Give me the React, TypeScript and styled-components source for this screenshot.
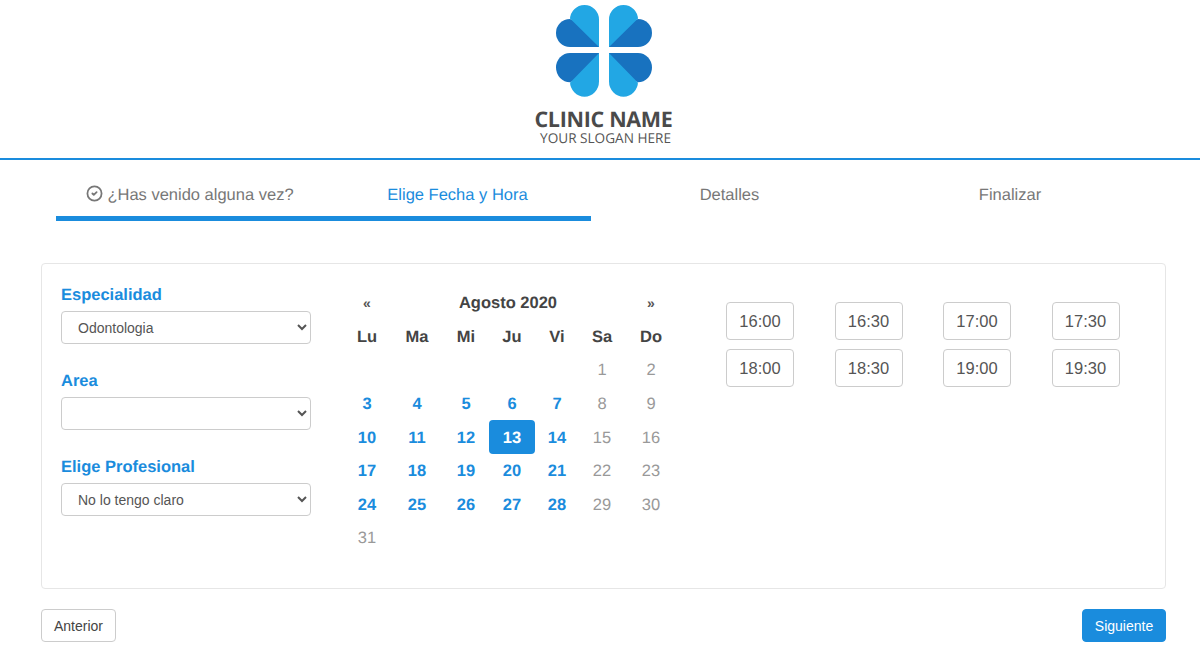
import * as React from "react";
import styled, { createGlobalStyle } from "styled-components";
import { CircleCheck } from "lucide-react";

const BLUE = "#1a8cdd";

const GlobalStyle = createGlobalStyle`
  html, body {
    margin: 0;
    padding: 0;
    background: #fff;
    font-family: "Liberation Sans", Arial, sans-serif;
    color: #555;
    text-rendering: geometricPrecision;
  }
`;

const Page = styled.div`
  width: 1200px;
  height: 654px;
  overflow: hidden;
`;

const Header = styled.header`
  height: 158px;
  border-bottom: 2px solid ${BLUE};
  display: flex;
  flex-direction: column;
  align-items: center;
`;

const LogoMark = styled.svg`
  display: block;
  width: 96px;
  height: 92px;
  margin: 5px 0 0 8px;
`;

const ClinicName = styled.div`
  font-family: "Open Sans", sans-serif;
  font-weight: 700;
  font-size: 21.5px;
  line-height: 20px;
  margin: 13px 0 0 7px;
  letter-spacing: -0.3px;
  color: #4a4a4a;
`;

const Slogan = styled.div`
  font-family: "Open Sans", sans-serif;
  font-size: 13.6px;
  line-height: 16px;
  margin-left: 11px;
  color: #555;
`;

const Tabs = styled.nav`
  display: grid;
  grid-template-columns: 268px 267px 277px 284px;
  margin-left: 56px;
  height: 61px;
`;

const Tab = styled.div<{ $active?: boolean; $done?: boolean }>`
  display: flex;
  align-items: center;
  justify-content: center;
  gap: 4px;
  box-sizing: border-box;
  padding-top: 14px;
  font-size: 16.5px;
  color: ${(p) => (p.$active ? BLUE : "#777")};
  border-bottom: 5px solid ${(p) => (p.$active || p.$done ? BLUE : "transparent")};
`;

const DoneIcon = styled(CircleCheck)`
  margin-top: -3px;
`;

const Content = styled.main`
  margin: 42px 34px 0 41px;
`;

const Card = styled.section`
  display: flex;
  box-sizing: border-box;
  height: 326px;
  padding: 22px 19px 0;
  border: 1px solid #e6e6e6;
  border-radius: 4px;
`;

const Filters = styled.div`
  width: 250px;
  margin-right: 32px;
`;

const Field = styled.div`
  height: 86px;
`;

const FieldLabel = styled.label`
  display: block;
  height: 25px;
  font-size: 16.5px;
  font-weight: 700;
  line-height: 18px;
  color: ${BLUE};
`;

const Select = styled.select`
  display: block;
  width: 100%;
  height: 33px;
  box-sizing: border-box;
  padding: 0 8px 0 12px;
  border: 1px solid #ccc;
  border-radius: 4px;
  background: #fff;
  font-family: inherit;
  font-size: 14px;
  color: #555;
`;

const Calendar = styled.div`
  display: grid;
  grid-template-columns: 48px 52px 46px 46px 44px 46px 52px;
  grid-auto-rows: 33.6px;
  align-self: flex-start;
  margin-right: 49px;
`;

const Cell = styled.div`
  display: flex;
  align-items: center;
  justify-content: center;
  padding-top: 2px;
  box-sizing: border-box;
`;

const Arrow = styled(Cell)`
  padding-top: 0;
  font-size: 14px;
  font-weight: 700;
  color: #555;
`;

const MonthTitle = styled(Cell)`
  grid-column: span 5;
  font-size: 16.5px;
  font-weight: 700;
  color: #444;
`;

const WeekDay = styled(Cell)`
  font-size: 16.5px;
  font-weight: 700;
  color: #444;
`;

const Day = styled(Cell)<{ $available?: boolean; $selected?: boolean }>`
  font-size: 16.5px;
  font-weight: ${(p) => (p.$available ? 700 : 400)};
  color: ${(p) => (p.$selected ? "#fff" : p.$available ? BLUE : "#999")};
  background: ${(p) => (p.$selected ? BLUE : "transparent")};
  border-radius: 4px;
`;

const Times = styled.div`
  display: grid;
  grid-template-columns: repeat(4, 68px);
  justify-content: space-between;
  align-content: start;
  row-gap: 9px;
  width: 393.5px;
  margin-top: 16px;
`;

const TimeButton = styled.button`
  height: 38px;
  padding: 0;
  border: 1px solid #ccc;
  border-radius: 4px;
  background: #fff;
  font-family: inherit;
  font-size: 16.5px;
  color: #555;
`;

const Footer = styled.div`
  display: flex;
  justify-content: space-between;
  margin-top: 20px;
`;

const NavButton = styled.button<{ $primary?: boolean }>`
  height: 33px;
  box-sizing: border-box;
  padding: 0;
  width: ${(p) => (p.$primary ? "84px" : "75px")};
  border: 1px solid ${(p) => (p.$primary ? BLUE : "#ccc")};
  border-radius: 4px;
  background: ${(p) => (p.$primary ? BLUE : "#fff")};
  color: ${(p) => (p.$primary ? "#fff" : "#444")};
  font-family: inherit;
  font-size: 14px;
`;

const weekDays = ["Lu", "Ma", "Mi", "Ju", "Vi", "Sa", "Do"];
const times = ["16:00", "16:30", "17:00", "17:30", "18:00", "18:30", "19:00", "19:30"];

// agosto 2020 starts on a Saturday, so five empty cells first
const leading = 5;
const days = Array.from({ length: 31 }, (_, i) => i + 1);

function isAvailable(day: number) {
  const weekIndex = (day - 1 + leading) % 7;
  return weekIndex < 5 && day < 29;
}

function Petal() {
  return (
    <>
      {/* dark part runs on under the light one, so the diagonal has no seam */}
      <path d="M43 42 H14 A14 14 0 0 1 14 14 L43 26 Z" fill="#1872bf" />
      <path d="M43 42 V14.5 A14.5 14.5 0 0 0 14 14.5 V13.5 Z" fill="#22a7e4" />
    </>
  );
}

function Logo() {
  return (
    <LogoMark viewBox="0 0 96 92" aria-hidden="true">
      <Petal />
      <g transform="matrix(-1 0 0 1 96 0)"><Petal /></g>
      <g transform="matrix(1 0 0 -1.04 0 91.7)"><Petal /></g>
      <g transform="matrix(-1 0 0 -1.04 96 91.7)"><Petal /></g>
    </LogoMark>
  );
}

export default function App() {
  return (
    <Page>
      <GlobalStyle />
      <Header>
        <Logo />
        <ClinicName>CLINIC NAME</ClinicName>
        <Slogan>YOUR SLOGAN HERE</Slogan>
      </Header>

      <Tabs>
        <Tab $done>
          <DoneIcon size={17} strokeWidth={2.5} />
          ¿Has venido alguna vez?
        </Tab>
        <Tab $active>Elige Fecha y Hora</Tab>
        <Tab>Detalles</Tab>
        <Tab>Finalizar</Tab>
      </Tabs>

      <Content>
        <Card>
          <Filters>
            <Field>
              <FieldLabel>Especialidad</FieldLabel>
              <Select defaultValue="Odontologia">
                <option>Odontologia</option>
              </Select>
            </Field>
            <Field>
              <FieldLabel>Area</FieldLabel>
              <Select defaultValue="">
                <option value=""></option>
              </Select>
            </Field>
            <Field>
              <FieldLabel>Elige Profesional</FieldLabel>
              <Select defaultValue="No lo tengo claro">
                <option>No lo tengo claro</option>
              </Select>
            </Field>
          </Filters>

          <Calendar>
            <Arrow>«</Arrow>
            <MonthTitle>Agosto 2020</MonthTitle>
            <Arrow>»</Arrow>
            {weekDays.map((d) => (
              <WeekDay key={d}>{d}</WeekDay>
            ))}
            {Array.from({ length: leading }, (_, i) => (
              <Cell key={`empty-${i}`} />
            ))}
            {days.map((d) => (
              <Day key={d} $available={isAvailable(d)} $selected={d === 13}>
                {d}
              </Day>
            ))}
          </Calendar>

          <Times>
            {times.map((t) => (
              <TimeButton key={t}>{t}</TimeButton>
            ))}
          </Times>
        </Card>

        <Footer>
          <NavButton>Anterior</NavButton>
          <NavButton $primary>Siguiente</NavButton>
        </Footer>
      </Content>
    </Page>
  );
}
